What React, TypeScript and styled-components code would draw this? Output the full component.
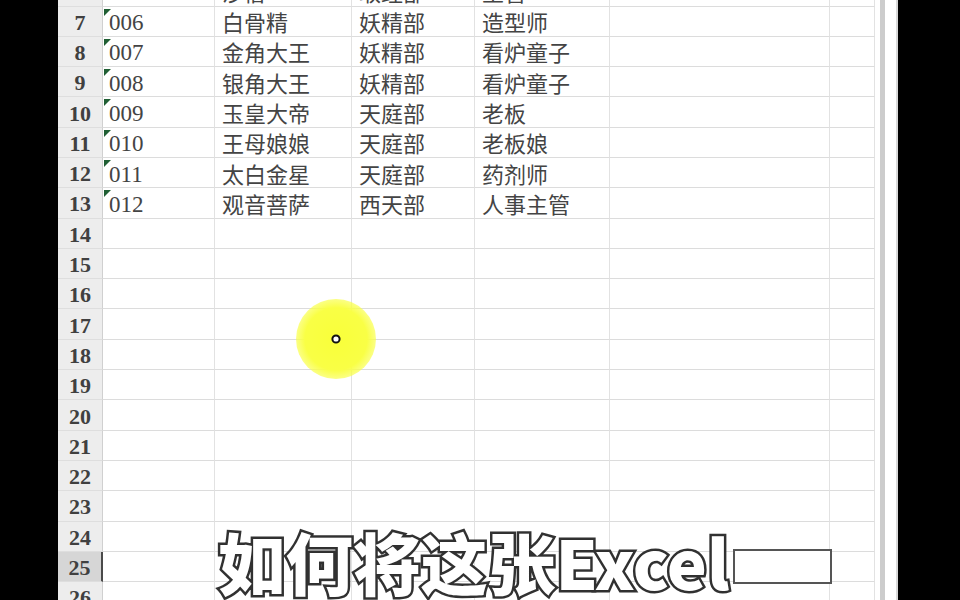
import React from "react";
import styled, { createGlobalStyle } from "styled-components";

const Global = createGlobalStyle`
  html, body { margin: 0; padding: 0; background: #000; }
  #root { width: 960px; height: 600px; overflow: hidden; }
`;

const Stage = styled.div`
  position: relative;
  width: 960px;
  height: 600px;
  display: flex;
  background: #000;
  overflow: hidden;
`;

const LeftBlack = styled.div`
  width: 58px;
  flex: none;
  background: #000;
`;

const Sheet = styled.div`
  width: 840px;
  flex: none;
  display: flex;
  background: #fff;
  overflow: hidden;
`;

const GridArea = styled.div`
  width: 817px;
  flex: none;
  overflow: hidden;
`;

const Grid = styled.div`
  display: grid;
  grid-template-columns: 45px 112px 137px 123px 135px 220px 45px;
  grid-auto-rows: 30.3px;
  margin-top: -23.8px;
`;

const RowHead = styled.div<{ $active?: boolean }>`
  display: flex;
  align-items: center;
  justify-content: center;
  background: ${(p) => (p.$active ? "#d6d6d6" : "#ededed")};
  border-bottom: 1px solid #dedede;
  border-right: ${(p) => (p.$active ? "2px solid #4a4a4a" : "1px solid #d0d0d0")};
  font-family: "Liberation Serif", serif;
  font-weight: bold;
  font-size: 22px;
  color: #404040;
  box-sizing: border-box;
  padding-top: 3px;
`;

const Cell = styled.div<{ $flag?: boolean }>`
  position: relative;
  display: flex;
  align-items: center;
  padding-left: ${(p) => (p.$flag ? "6px" : "7px")};
  padding-top: ${(p) => (p.$flag ? "4px" : "0")};
  border-right: 1px solid #e2e2e2;
  border-bottom: 1px solid #dcdcdc;
  box-sizing: border-box;
  font-family: "Liberation Serif", "Noto Sans CJK SC", serif;
  font-size: ${(p) => (p.$flag ? "23px" : "22px")};
  color: #444;
  white-space: nowrap;
  overflow: hidden;
`;

const Flag = styled.span`
  position: absolute;
  left: 1px;
  top: 2px;
  width: 0;
  height: 0;
  border-top: 7px solid #1f5e33;
  border-right: 7px solid transparent;
`;

const RightGutter = styled.div`
  flex: 1;
  display: flex;
  padding-left: 5px;
  border-right: 2px solid #d8d8d8;
`;

const ScrollBar = styled.div`
  width: 5px;
  background: #cccccc;
`;

const RightBlack = styled.div`
  flex: 1;
  background: #000;
`;

const Click = styled.div`
  position: absolute;
  left: 296px;
  top: 299px;
  width: 80px;
  height: 80px;
  border-radius: 50%;
  background: radial-gradient(circle, #f9ff3a 0%, #f9ff45 55%, rgba(250, 255, 90, 0) 100%);
  display: flex;
  align-items: center;
  justify-content: center;
`;

const Caption = styled.div`
  position: absolute;
  left: 218px;
  top: 527px;
  display: flex;
  align-items: flex-start;
`;

const CaptionText = styled.span`
  font-family: "Noto Sans CJK SC", sans-serif;
  font-weight: 900;
  font-size: 67.5px;
  line-height: 67px;
  color: #fff;
  -webkit-text-stroke: 5px #333;
  paint-order: stroke fill;
  text-shadow: 0 0 3px rgba(0, 0, 0, 0.2);
`;

const CaptionBox = styled.div`
  width: 95px;
  height: 31px;
  margin-top: 22px;
  margin-left: 4px;
  background: #fff;
  border: 2px solid #555;
`;

type Row = { n: number; a: string; b: string; c: string; d: string };

const rows: Row[] = [
  { n: 6, a: "005", b: "沙僧", c: "取经部", d: "主管" },
  { n: 7, a: "006", b: "白骨精", c: "妖精部", d: "造型师" },
  { n: 8, a: "007", b: "金角大王", c: "妖精部", d: "看炉童子" },
  { n: 9, a: "008", b: "银角大王", c: "妖精部", d: "看炉童子" },
  { n: 10, a: "009", b: "玉皇大帝", c: "天庭部", d: "老板" },
  { n: 11, a: "010", b: "王母娘娘", c: "天庭部", d: "老板娘" },
  { n: 12, a: "011", b: "太白金星", c: "天庭部", d: "药剂师" },
  { n: 13, a: "012", b: "观音菩萨", c: "西天部", d: "人事主管" },
];
for (let n = 14; n <= 26; n++) rows.push({ n, a: "", b: "", c: "", d: "" });

export default function App() {
  return (
    <>
      <Global />
      <Stage>
        <LeftBlack />
        <Sheet>
          <GridArea>
            <Grid>
              {rows.map((r) => (
                <React.Fragment key={r.n}>
                  <RowHead $active={r.n === 25}>{r.n}</RowHead>
                  <Cell $flag={!!r.a}>
                    {r.a && <Flag />}
                    {r.a}
                  </Cell>
                  <Cell>{r.b}</Cell>
                  <Cell>{r.c}</Cell>
                  <Cell>{r.d}</Cell>
                  <Cell />
                  <Cell />
                </React.Fragment>
              ))}
            </Grid>
          </GridArea>
          <RightGutter>
            <ScrollBar />
          </RightGutter>
        </Sheet>
        <RightBlack />
        <Click>
          <svg width="12" height="12" viewBox="0 0 12 12">
            <circle cx="6" cy="6" r="3.6" fill="#fff" stroke="#111" strokeWidth="2" />
          </svg>
        </Click>
        <Caption>
          <CaptionText>如何将这张Excel</CaptionText>
          <CaptionBox />
        </Caption>
      </Stage>
    </>
  );
}
